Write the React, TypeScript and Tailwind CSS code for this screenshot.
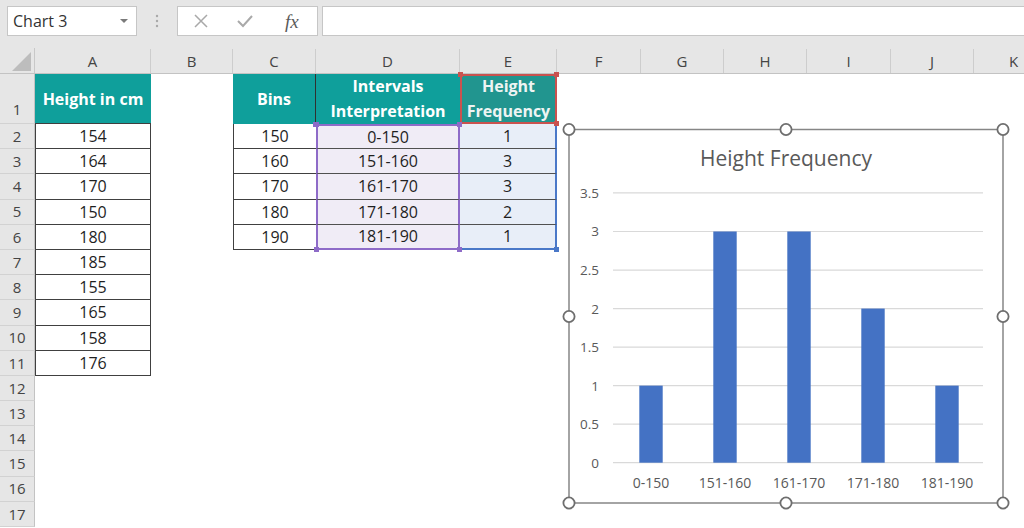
import React from 'react';

const COLS = ['A', 'B', 'C', 'D', 'E', 'F', 'G', 'H', 'I', 'J', 'K'];
const COL_W = [
  'w-[116px]',
  'w-[82px]',
  'w-[83px]',
  'w-[144px]',
  'w-[97px]',
  'w-[84px]',
  'w-[83px]',
  'w-[83px]',
  'w-[84px]',
  'w-[83px]',
  'w-[80px]',
];

const heights = [154, 164, 170, 150, 180, 185, 155, 165, 158, 176];
const bins = [150, 160, 170, 180, 190];
const intervals = ['0-150', '151-160', '161-170', '171-180', '181-190'];
const freq = [1, 3, 3, 2, 1];

const teal = 'bg-[#0f9f9b] text-white font-bold';

// little square selection handle
const Handle = ({ pos, color }: { pos: string; color: string }) => (
  <span className={`absolute w-[5px] h-[5px] z-10 ${pos} ${color}`} />
);

function Toolbar() {
  return (
    <div className="h-[48px] bg-[#e6e6e6] flex items-start pt-[6px] pl-[7px]">
      <div className="w-[130px] shrink-0 h-[30px] bg-white border border-[#c6c6c6] flex items-center pl-[5px] pr-[8px] justify-between">
        <span className="text-[16px] text-[#333]">Chart 3</span>
        <svg width="8" height="5" viewBox="0 0 8 5">
          <path d="M0 0 L8 0 L4 4 Z" fill="#7a7a7a" />
        </svg>
      </div>
      <div className="w-[40px] shrink-0 h-[30px] flex items-center justify-center">
        <svg width="4" height="14" viewBox="0 0 4 14">
          <circle cx="2" cy="2" r="1.2" fill="#a8a8a8" />
          <circle cx="2" cy="7" r="1.2" fill="#a8a8a8" />
          <circle cx="2" cy="12" r="1.2" fill="#a8a8a8" />
        </svg>
      </div>
      <div className="w-[141px] shrink-0 h-[30px] bg-white border border-[#c6c6c6] flex items-center pl-[16px]">
        <svg width="14" height="14" viewBox="0 0 14 14">
          <path d="M1 1 L13 13 M13 1 L1 13" stroke="#a9a9a9" strokeWidth="1.5" fill="none" />
        </svg>
        <svg className="ml-[29px]" width="16" height="14" viewBox="0 0 16 14">
          <path d="M1 7 L6 12 L15 2" stroke="#a9a9a9" strokeWidth="2" fill="none" />
        </svg>
        <span className="ml-[32px] italic font-['Liberation_Serif',serif] text-[19px] text-[#5a5a5a] leading-none">fx</span>
      </div>
      <div className="ml-[4px] flex-1 h-[30px] bg-white border border-[#c6c6c6] border-r-0" />
    </div>
  );
}

function ColumnHeader() {
  return (
    <div className="flex h-[26px] bg-[#e6e6e6] border-b border-[#c3c3c3]">
      <div className="w-[35px] shrink-0 h-full flex items-end justify-end pr-[3px] pb-[2px] border-r border-[#c8c8c8]">
        <svg width="19" height="19" viewBox="0 0 19 19">
          <path d="M19 0 L19 19 L0 19 Z" fill="#bdbdbd" />
        </svg>
      </div>
      {COLS.map((c, i) => (
        <div
          key={c}
          className={`${COL_W[i]} shrink-0 h-[24px] self-end flex items-center justify-center text-[15px] text-[#444] border-r border-[#cdcdcd]`}
        >
          {c}
        </div>
      ))}
    </div>
  );
}

function Row({ n }: { n: number }) {
  const h = n === 1 ? 'h-[50px]' : 'h-[25.2px]';
  const hdr = n === 1 ? 'items-end pb-[3px]' : 'items-center';
  const body = n - 2; // index into data arrays
  const inMain = n >= 2 && n <= 6;
  const lastMain = n === 6;

  // column A
  let a: React.ReactNode = <div className={`${COL_W[0]} shrink-0`} />;
  if (n === 1) {
    a = (
      <div className={`${COL_W[0]} shrink-0 ${teal} flex items-center justify-center text-[16px] border-b border-[#3f3f3f]`}>
        Height in cm
      </div>
    );
  } else if (n <= 11) {
    a = (
      <div className={`${COL_W[0]} shrink-0 flex items-center justify-center border-l border-r border-b border-[#404040] text-[16px] text-[#1f1f1f]`}>
        {heights[body]}
      </div>
    );
  }

  // columns C, D, E
  let c: React.ReactNode = <div className={`${COL_W[2]} shrink-0`} />;
  let d: React.ReactNode = <div className={`${COL_W[3]} shrink-0`} />;
  let e: React.ReactNode = <div className={`${COL_W[4]} shrink-0`} />;
  if (n === 1) {
    c = (
      <div className={`${COL_W[2]} shrink-0 ${teal} flex items-center justify-center text-[16px] border-r border-[#303030]`}>
        Bins
      </div>
    );
    d = (
      <div className={`${COL_W[3]} shrink-0 ${teal} flex flex-col items-center justify-center text-[16px] leading-[25px] relative`}>
        <span>Intervals</span>
        <span>Interpretation</span>
        <Handle pos="-left-[3px] -bottom-[3px]" color="bg-[#8e6bc8]" />
      </div>
    );
    e = (
      <div className={`${COL_W[4]} shrink-0 bg-[#21958f] text-[#eef4f3] font-bold flex flex-col items-center justify-center text-[16px] leading-[25px] border-2 border-[#c9524f] relative`}>
        <span>Height</span>
        <span>Frequency</span>
        <Handle pos="-left-[4px] -top-[4px]" color="bg-[#c9524f]" />
        <Handle pos="-right-[4px] -top-[4px]" color="bg-[#c9524f]" />
        <Handle pos="-right-[4px] -bottom-[4px]" color="bg-[#c9524f]" />
      </div>
    );
  } else if (inMain) {
    c = (
      <div className={`${COL_W[2]} shrink-0 flex items-center justify-center border-l border-b border-[#404040] text-[16px] text-[#1f1f1f]`}>
        {bins[body]}
      </div>
    );
    d = (
      <div
        className={`${COL_W[3]} shrink-0 relative flex items-center justify-center bg-[#f0ecf6] border-x-2 border-x-[#8e6bc8] text-[16px] text-[#1f1f1f] ${
          n === 2 ? 'border-t-2 border-t-[#8e6bc8]' : ''
        } ${lastMain ? 'border-b-2 border-b-[#8e6bc8]' : 'border-b border-b-[#505050]'}`}
      >
        {intervals[body]}
        {n === 2 && <Handle pos="-left-[4px] -top-[4px]" color="bg-[#8e6bc8]" />}
        {n === 2 && <Handle pos="-right-[4px] -top-[4px]" color="bg-[#8e6bc8]" />}
        {lastMain && <Handle pos="-left-[4px] -bottom-[4px]" color="bg-[#8e6bc8]" />}
        {lastMain && <Handle pos="-right-[4px] -bottom-[4px]" color="bg-[#8e6bc8]" />}
      </div>
    );
    e = (
      <div
        className={`${COL_W[4]} shrink-0 relative flex items-center justify-center bg-[#e8eef8] border-r-2 border-r-[#4a78c8] text-[16px] text-[#1f1f1f] ${
          lastMain ? 'border-b-2 border-b-[#4a78c8]' : 'border-b border-b-[#505050]'
        }`}
      >
        {freq[body]}
        {lastMain && <Handle pos="-right-[4px] -bottom-[4px]" color="bg-[#4a78c8]" />}
      </div>
    );
  }

  return (
    <div className={`flex ${h}`}>
      <div className={`w-[35px] shrink-0 bg-[#e6e6e6] flex ${hdr} justify-center text-[15px] text-[#444] border-r border-b border-r-[#c3c3c3] border-b-[#d2d2d2]`}>
        {n}
      </div>
      {a}
      <div className={`${COL_W[1]} shrink-0`} />
      {c}
      {d}
      {e}
      {COL_W.slice(5).map((w, i) => (
        <div key={i} className={`${w} shrink-0`} />
      ))}
    </div>
  );
}

function Chart() {
  const zero = 462.7;
  const step = 77.07; // pixels per unit
  const ticks = [0, 0.5, 1, 1.5, 2, 2.5, 3, 3.5];
  const handles: [number, number][] = [
    [569, 129.5],
    [786, 129.5],
    [1003, 129.5],
    [569, 316.5],
    [1003, 316.5],
    [569, 503],
    [786, 503],
    [1003, 503],
  ];
  return (
    <svg
      className="absolute left-[560px] top-[115px] w-[464px] h-[413px]"
      viewBox="560 115 464 413"
      fontFamily="'Open Sans', sans-serif"
    >
      <rect x="569" y="129.5" width="434" height="373.5" fill="#fff" stroke="#868686" strokeWidth="1.5" />
      <text x="786" y="166" textAnchor="middle" fontSize="21" fill="#595959">
        Height Frequency
      </text>
      {ticks.map((t) => {
        const y = zero - t * step;
        return (
          <g key={t}>
            <line x1="613" x2="983" y1={y} y2={y} stroke="#d9d9d9" strokeWidth="1.2" />
            <text x="599" y={y + 5} textAnchor="end" fontSize="13.5" fill="#595959">
              {t}
            </text>
          </g>
        );
      })}
      {freq.map((v, i) => (
        <rect key={i} x={639.3 + i * 74} y={zero - v * step} width="23.4" height={v * step} fill="#4472c4" />
      ))}
      {intervals.map((l, i) => (
        <text key={l} x={651 + i * 74} y="488" textAnchor="middle" fontSize="14" fill="#595959">
          {l}
        </text>
      ))}
      {handles.map(([x, y], i) => (
        <circle key={i} cx={x} cy={y} r="5.6" fill="#fff" stroke="#6e6e6e" strokeWidth="1.8" />
      ))}
    </svg>
  );
}

export default function App() {
  const rows = Array.from({ length: 17 }, (_, i) => i + 1);
  return (
    <div className="w-[1024px] h-[528px] overflow-hidden bg-white relative font-['Open_Sans',sans-serif]">
      <Toolbar />
      <ColumnHeader />
      {rows.map((n) => (
        <Row key={n} n={n} />
      ))}
      <Chart />
    </div>
  );
}
